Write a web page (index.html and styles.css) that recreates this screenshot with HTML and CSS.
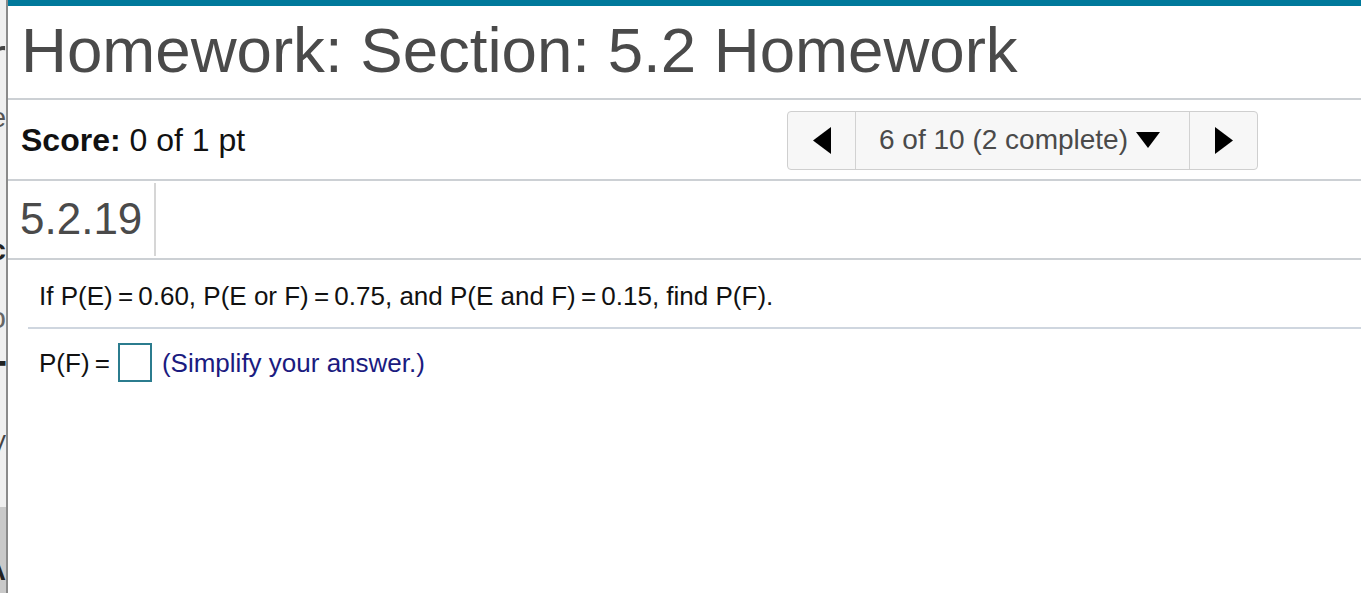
FILE: index.html
```html
<!DOCTYPE html>
<html lang="en">
<head>
<meta charset="utf-8">
<title>Homework: Section: 5.2 Homework</title>
<link rel="stylesheet" href="styles.css">
</head>
<body>
<div class="app">
  <aside class="behind">
    <div class="frag f-r"><span>Homewor</span></div>
    <div class="frag f-e"><span>Score</span></div>
    <div class="frag f-c"><span>Sec</span></div>
    <div class="frag f-o"><span>Do</span></div>
    <div class="frag f-t"><span>T</span></div>
    <div class="frag f-v"><span>V</span></div>
    <div class="behind-foot"><div class="frag f-a"><span>A</span></div></div>
  </aside>
  <main class="panel">
    <div class="accent"></div>
    <h1 class="title">Homework: Section: 5.2 Homework</h1>
    <div class="score-row">
      <div class="score"><b>Score:</b> 0 of 1 pt</div>
      <div class="nav">
        <button class="nav-btn nav-arrow" aria-label="Previous question">
          <svg width="18" height="27" viewBox="0 0 18 27"><path d="M18 0 L0 13.5 L18 27 Z" fill="#000"/></svg>
        </button>
        <button class="nav-btn nav-mid">
          <span>6 of 10 (2 complete)</span>
          <svg width="24" height="16" viewBox="0 0 24 16"><path d="M0 0 L24 0 L12 16 Z" fill="#000"/></svg>
        </button>
        <button class="nav-btn nav-arrow" aria-label="Next question">
          <svg width="18" height="27" viewBox="0 0 18 27"><path d="M0 0 L18 13.5 L0 27 Z" fill="#000"/></svg>
        </button>
      </div>
    </div>
    <div class="qnum-row">
      <div class="qnum">5.2.19</div>
    </div>
    <div class="question">
      <p class="qtext">If P(E)&#8201;=&#8201;0.60, P(E or F)&#8201;=&#8201;0.75, and P(E and F)&#8201;=&#8201;0.15, find P(F).</p>
      <div class="answer">
        <span class="lhs">P(F)&#8201;=</span>
        <span class="box"></span>
        <span class="hint">(Simplify your answer.)</span>
      </div>
    </div>
  </main>
</div>
</body>
</html>
```

FILE: styles.css
```css
* { box-sizing: border-box; }
html, body { margin: 0; padding: 0; }
body {
  width: 1361px;
  height: 593px;
  overflow: hidden;
  background: #fff;
  font-family: "Liberation Sans", Arial, sans-serif;
}
.app {
  display: flex;
  height: 593px;
}

/* page behind the dialog, mostly hidden */
.behind {
  width: 8px;
  flex: 0 0 8px;
  background: #efefef;
  border-right: 2px solid #8a8a8a;
  display: flex;
  flex-direction: column;
  overflow: hidden;
}
.frag {
  display: flex;
  justify-content: flex-end;
  white-space: nowrap;
  overflow: hidden;
  flex: 0 0 auto;
}
.f-r { margin-top: 28px; height: 56px; font-size: 50px; line-height: 56px; color: #444; }
.f-e { margin-top: 14px; height: 40px; font-size: 28px; line-height: 40px; color: #555; }
.f-c { margin-top: 92px; height: 40px; font-size: 30px; line-height: 40px; color: #222; font-weight: bold; }
.f-o { margin-top: 28px; height: 40px; font-size: 30px; line-height: 40px; color: #666; }
.f-t { margin-top: 14px; height: 48px; font-size: 42px; line-height: 48px; color: #222; font-weight: bold; }
.f-v { margin-top: 28px; height: 32px; font-size: 24px; line-height: 32px; color: #444; }
.behind-foot {
  margin-top: 47px;
  flex: 1 1 auto;
  background: #c9c9c9;
  padding-top: 48px;
}
.f-a { height: 32px; font-size: 28px; line-height: 32px; color: #222; font-weight: bold; }

/* main panel */
.panel {
  flex: 1 1 auto;
  min-width: 0;
  display: flex;
  flex-direction: column;
}
.accent {
  height: 6px;
  background: #00799b;
}
.title {
  margin: 0;
  padding: 0 0 4px 13px;
  font-size: 63.6px;
  line-height: 88px;
  font-weight: normal;
  color: #4a4a4a;
  white-space: nowrap;
  border-bottom: 2px solid #ccd0d4;
}

.score-row {
  height: 81px;
  display: flex;
  align-items: center;
  justify-content: space-between;
  padding: 1px 103px 0 13px;
  border-bottom: 2px solid #ccd0d4;
}
.score {
  font-size: 32px;
  color: #111;
}
.nav {
  display: flex;
  height: 59px;
  border: 1px solid #cfcfcf;
  border-radius: 4px;
  background: #f7f7f7;
  overflow: hidden;
}
.nav-btn {
  font-family: inherit;
  background: transparent;
  border: 0;
  margin: 0;
  padding: 0;
  display: flex;
  align-items: center;
  justify-content: center;
  cursor: pointer;
}
.nav-arrow {
  width: 67px;
}
.nav-mid {
  width: 335px;
  border-left: 1px solid #d2d2d2;
  border-right: 1px solid #d2d2d2;
  gap: 8px;
  padding-right: 6px;
  font-size: 28px;
  color: #4a4a4a;
}

.qnum-row {
  height: 79px;
  display: flex;
  align-items: stretch;
  padding: 2px 0;
  border-bottom: 2px solid #ccd0d4;
}
.qnum {
  padding: 0 12px 0 12px;
  border-right: 2px solid #d6d6d6;
  font-size: 44px;
  line-height: 72px;
  color: #4a4a4a;
}

.question {
  margin-left: 20px;
}
.qtext {
  margin: 0;
  padding: 21px 0 16px 11px;
  font-size: 26px;
  line-height: 30px;
  color: #111;
  border-bottom: 2px solid #cfd6df;
}
.answer {
  display: flex;
  align-items: center;
  padding: 14px 0 0 11px;
  font-size: 26px;
  line-height: 30px;
}
.lhs {
  color: #111;
}
.box {
  width: 34px;
  height: 39px;
  margin-left: 8px;
  border: 2px solid #2b7c8e;
  background: #fff;
}
.hint {
  margin-left: 10px;
  color: #1b1b80;
}
```
